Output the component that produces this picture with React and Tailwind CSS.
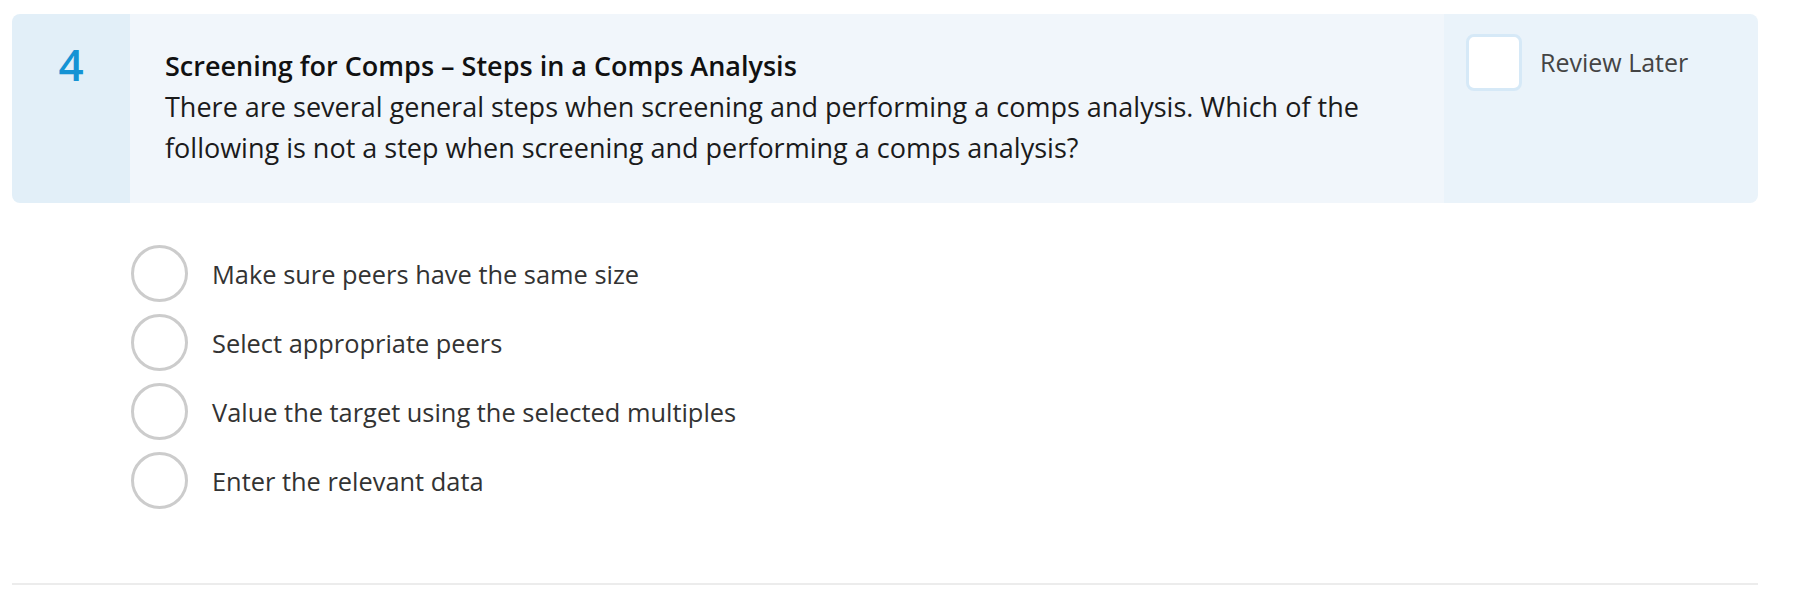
const options = [
  "Make sure peers have the same size",
  "Select appropriate peers",
  "Value the target using the selected multiples",
  "Enter the relevant data",
];

const App = () => {
  return (
    <div className="w-[1806px] h-[592px] bg-white pt-[14px] px-[12px] font-['Open_Sans',sans-serif]">
      <div className="w-[1746px] flex rounded-[8px] overflow-hidden">
        <div className="w-[118px] shrink-0 bg-[#e2eff8] flex justify-center pt-[20px]">
          <span className="text-[44px] leading-[60px] font-semibold text-[#1493d4]">4</span>
        </div>
        <div className="flex-1 bg-[#f1f6fb] pl-[35px] pr-[60px] pt-[31px] pb-[35px]">
          <h2 className="text-[27px] leading-[41px] font-semibold text-[#111]">
            Screening for Comps – Steps in a Comps Analysis
          </h2>
          <p className="text-[27px] leading-[41px] text-[#1b1b1b]">
            There are several general steps when screening and performing a comps analysis. Which of the following is not a step when screening and performing a comps analysis?
          </p>
        </div>
        <div className="w-[314px] shrink-0 bg-[#eaf3fa] pl-[22px] pt-[20px] flex items-start gap-[18px]">
          <div className="w-[56px] h-[57px] shrink-0 bg-white border-[3px] border-[#d6e9f7] rounded-[8px]" />
          <span className="text-[25px] leading-[40px] text-[#444] pt-[8px]">Review Later</span>
        </div>
      </div>

      <div className="flex flex-col gap-[12px] mt-[42px] pl-[119px]">
        {options.map((o) => (
          <label key={o} className="flex items-center gap-[24px] cursor-pointer">
            <span className="w-[57px] h-[57px] shrink-0 rounded-full border-[3px] border-[#cccccc] bg-white" />
            <span className="text-[25.4px] leading-[40px] text-[#333]">{o}</span>
          </label>
        ))}
      </div>

      <div className="w-[1746px] h-[2px] bg-[#ececec] mt-[74px]" />
    </div>
  );
};

export default App;
